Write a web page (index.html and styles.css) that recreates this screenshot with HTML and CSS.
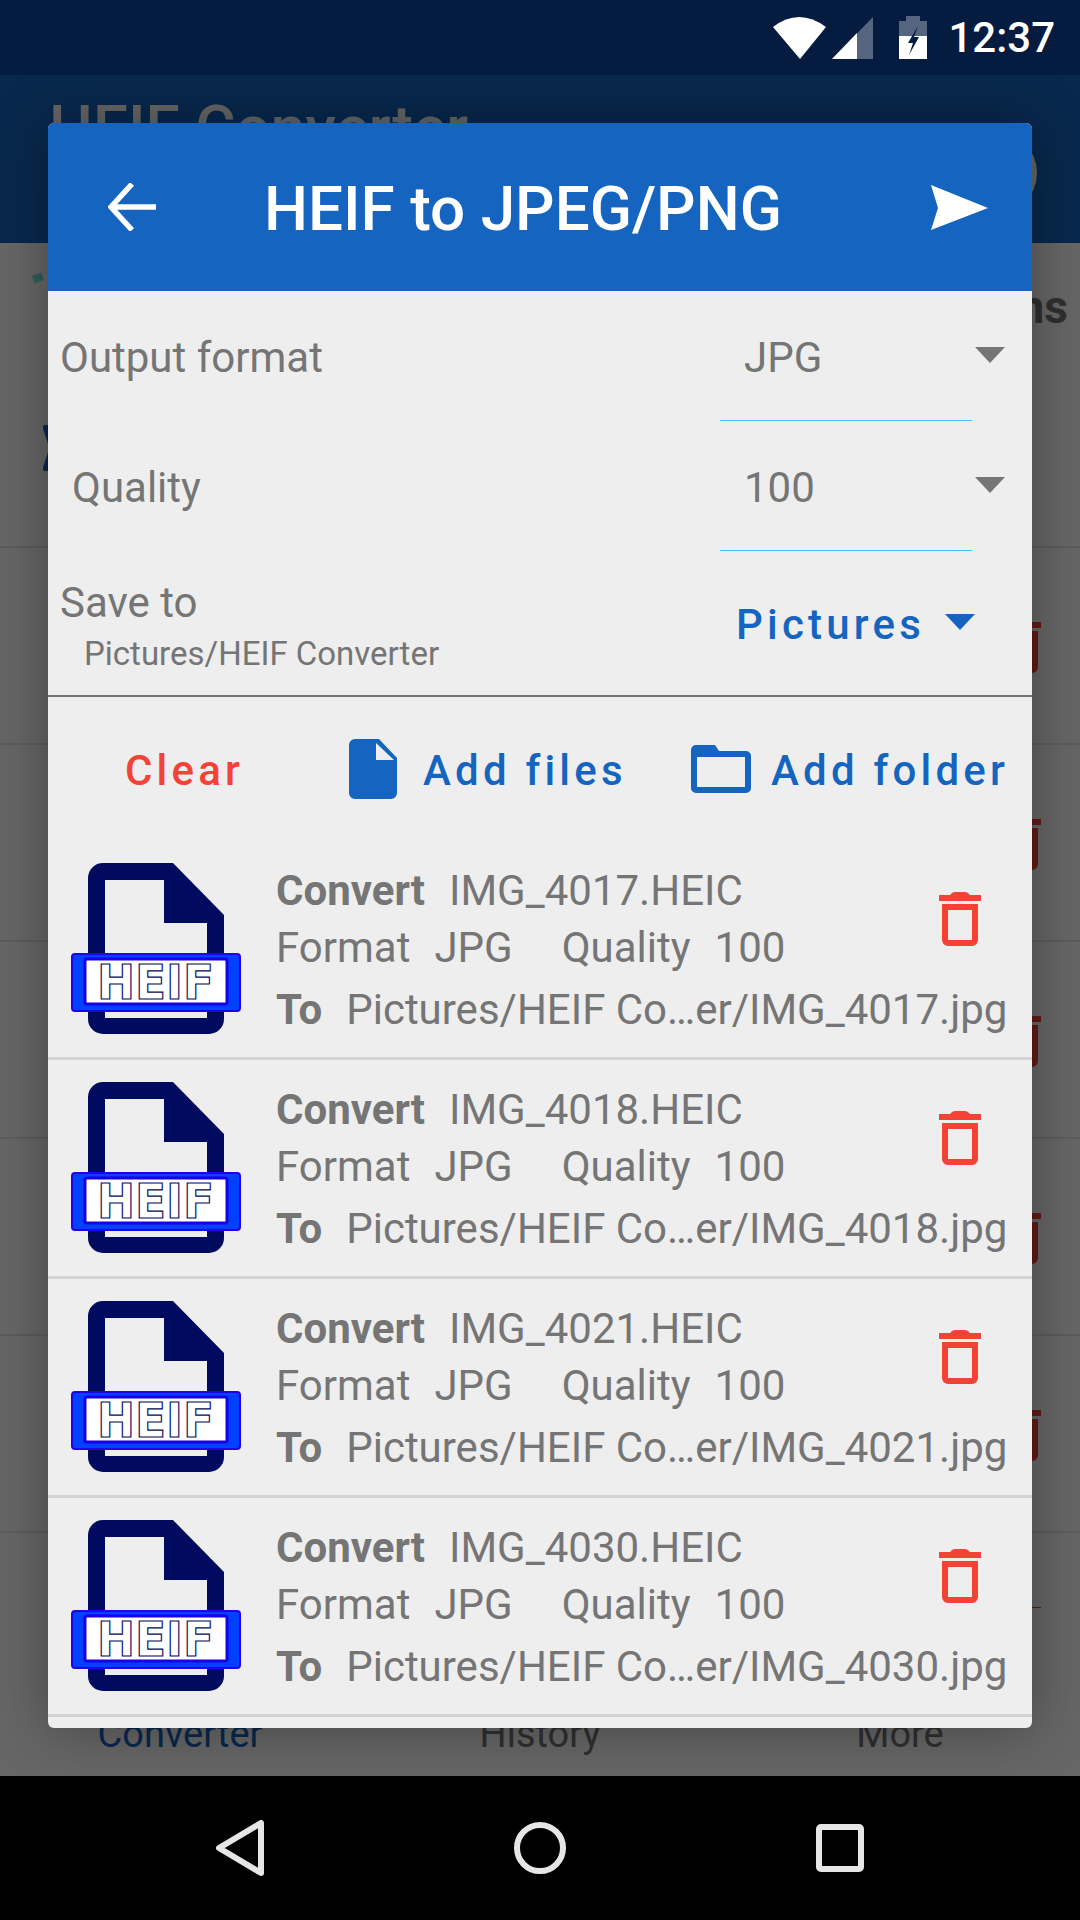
FILE: index.html
```html
<!DOCTYPE html>
<html>
  <head>
    <meta charset="utf-8" />
    <title>HEIF Converter</title>
    <link rel="stylesheet" href="styles.css">
  </head>
  <body>
    <svg class="defs" width="0" height="0">
      <symbol id="trash" viewBox="0 0 42 54">
        <path d="M11 3q2-3 5-3h10q3 0 5 3zM0 3h42v6H0z" />
        <path fill-rule="evenodd" d="M3 12h36v36a6 6 0 0 1-6 6H9a6 6 0 0 1-6-6zM9 18v30h24V18z" />
      </symbol>
    </svg>

    <div class="status-bar">
      <svg class="wifi" width="53" height="42" viewBox="0 0 53 42">
        <path fill="#fff" d="M0 10Q26-10 53 10L27 42Z" />
      </svg>
      <svg class="signal" width="41" height="42" viewBox="0 0 41 42">
        <path fill="#55657f" d="M41 0V42H0Z" />
        <path fill="#fff" d="M25 16V42H0Z" />
      </svg>
      <svg class="battery" width="28" height="43" viewBox="0 0 28 43">
        <path fill="#55657f" d="M7 0H21V5H28V20H0V5H7Z" />
        <path fill="#fff" d="M0 20H28V43H0Z" />
        <path fill="#051c40" d="M19 10L9 27H14L10 39L20 21H15Z" />
      </svg>
      <span class="clock">12:37</span>
    </div>

    <div class="main">
      <!-- the page behind the dialog -->
      <div class="app-bar">
        <div class="app-title">HEIF Converter</div>
        <div class="app-circle"></div>
      </div>
      <div class="back-list">
        <div class="back-head">
          <div class="back-mark"></div>
          <div class="back-options">Conversions</div>
          <svg class="back-x" width="30" height="46" viewBox="0 0 30 46">
            <path fill="none" stroke="#1565c0" stroke-width="6" d="M2 0L17 46M17 0L2 46" />
          </svg>
        </div>
        <div class="back-row"><svg class="back-trash"><use href="#trash" /></svg></div>
        <div class="back-row"><svg class="back-trash"><use href="#trash" /></svg></div>
        <div class="back-row"><svg class="back-trash"><use href="#trash" /></svg></div>
        <div class="back-row"><svg class="back-trash"><use href="#trash" /></svg></div>
        <div class="back-row"><svg class="back-trash"><use href="#trash" /></svg></div>
        <div class="back-row"><svg class="back-trash"><use href="#trash" /></svg></div>
      </div>
      <div class="tabs">
        <span class="tab tab-active">Converter</span>
        <span class="tab">History</span>
        <span class="tab">More</span>
      </div>

      <div class="scrim">
        <div class="dialog">
          <div class="dialog-header">
            <svg class="back-arrow" width="48" height="48" viewBox="0 0 48 48">
              <path fill="none" stroke="#fff" stroke-width="5.5" d="M24 1L3 24L24 47M3 24H48" />
            </svg>
            <div class="dialog-title">HEIF to JPEG/PNG</div>
            <svg class="send" width="57" height="45" viewBox="0 0 57 45">
              <path fill="#fff" d="M0 0L57 23L0 45L7 23Z" />
            </svg>
          </div>

          <div class="setting">
            <div class="setting-label">Output format</div>
            <div class="select-value">JPG</div>
            <div class="arrow"></div>
          </div>
          <div class="setting">
            <div class="setting-label setting-label-quality">Quality</div>
            <div class="select-value">100</div>
            <div class="arrow"></div>
          </div>
          <div class="setting setting-save">
            <div class="save-to">
              <div class="save-label">Save to</div>
              <div class="save-path">Pictures/HEIF Converter</div>
            </div>
            <div class="save-button">Pictures</div>
            <div class="arrow arrow-blue"></div>
          </div>

          <div class="actions">
            <div class="action action-clear"><span>Clear</span></div>
            <div class="action">
              <svg width="48" height="60" viewBox="0 0 48 60">
                <path fill="#1565c0" fill-rule="evenodd" d="M6 0H30L48 19V54a6 6 0 0 1-6 6H6a6 6 0 0 1-6-6V6a6 6 0 0 1 6-6ZM27 4V21H45Z" />
              </svg>
              <span>Add files</span>
            </div>
            <div class="action action-folder">
              <svg width="60" height="48" viewBox="0 0 60 48">
                <path fill="#1565c0" fill-rule="evenodd" d="M5 0H24L28 6H55a5 5 0 0 1 5 5V43a5 5 0 0 1-5 5H5a5 5 0 0 1-5-5V5a5 5 0 0 1 5-5ZM6 12V42H54V12Z" />
              </svg>
              <span>Add folder</span>
            </div>
          </div>

          <div class="item">
            <svg class="heif-icon" width="170" height="171" viewBox="0 0 170 171">
              <path class="doc" fill-rule="evenodd" d="M32 0H102L153 52V156a15 15 0 0 1-15 15H32a15 15 0 0 1-15-15V15a15 15 0 0 1 15-15ZM34 17V155H136V60H93V17Z" />
              <rect class="band" x="1" y="91" width="168" height="57" rx="3" />
              <rect class="band-inner" x="14" y="96" width="142" height="45" rx="2" />
              <text class="band-text" x="26" y="136" textLength="117" lengthAdjust="spacingAndGlyphs">HEIF</text>
            </svg>
            <div class="item-text">
              <div class="item-top">
                <div>
                  <div class="line line-first"><b>Convert</b><span>IMG_4017.HEIC</span></div>
                  <div class="line line-first"><span>Format</span><span>JPG</span><span class="quality">Quality</span><span>100</span></div>
                </div>
                <svg class="trash"><use href="#trash" /></svg>
              </div>
              <div class="line line-to"><b>To</b><span>Pictures/HEIF Co…er/IMG_4017.jpg</span></div>
            </div>
          </div>

          <div class="item">
            <svg class="heif-icon" width="170" height="171" viewBox="0 0 170 171">
              <path class="doc" fill-rule="evenodd" d="M32 0H102L153 52V156a15 15 0 0 1-15 15H32a15 15 0 0 1-15-15V15a15 15 0 0 1 15-15ZM34 17V155H136V60H93V17Z" />
              <rect class="band" x="1" y="91" width="168" height="57" rx="3" />
              <rect class="band-inner" x="14" y="96" width="142" height="45" rx="2" />
              <text class="band-text" x="26" y="136" textLength="117" lengthAdjust="spacingAndGlyphs">HEIF</text>
            </svg>
            <div class="item-text">
              <div class="item-top">
                <div>
                  <div class="line line-first"><b>Convert</b><span>IMG_4018.HEIC</span></div>
                  <div class="line line-first"><span>Format</span><span>JPG</span><span class="quality">Quality</span><span>100</span></div>
                </div>
                <svg class="trash"><use href="#trash" /></svg>
              </div>
              <div class="line line-to"><b>To</b><span>Pictures/HEIF Co…er/IMG_4018.jpg</span></div>
            </div>
          </div>

          <div class="item">
            <svg class="heif-icon" width="170" height="171" viewBox="0 0 170 171">
              <path class="doc" fill-rule="evenodd" d="M32 0H102L153 52V156a15 15 0 0 1-15 15H32a15 15 0 0 1-15-15V15a15 15 0 0 1 15-15ZM34 17V155H136V60H93V17Z" />
              <rect class="band" x="1" y="91" width="168" height="57" rx="3" />
              <rect class="band-inner" x="14" y="96" width="142" height="45" rx="2" />
              <text class="band-text" x="26" y="136" textLength="117" lengthAdjust="spacingAndGlyphs">HEIF</text>
            </svg>
            <div class="item-text">
              <div class="item-top">
                <div>
                  <div class="line line-first"><b>Convert</b><span>IMG_4021.HEIC</span></div>
                  <div class="line line-first"><span>Format</span><span>JPG</span><span class="quality">Quality</span><span>100</span></div>
                </div>
                <svg class="trash"><use href="#trash" /></svg>
              </div>
              <div class="line line-to"><b>To</b><span>Pictures/HEIF Co…er/IMG_4021.jpg</span></div>
            </div>
          </div>

          <div class="item">
            <svg class="heif-icon" width="170" height="171" viewBox="0 0 170 171">
              <path class="doc" fill-rule="evenodd" d="M32 0H102L153 52V156a15 15 0 0 1-15 15H32a15 15 0 0 1-15-15V15a15 15 0 0 1 15-15ZM34 17V155H136V60H93V17Z" />
              <rect class="band" x="1" y="91" width="168" height="57" rx="3" />
              <rect class="band-inner" x="14" y="96" width="142" height="45" rx="2" />
              <text class="band-text" x="26" y="136" textLength="117" lengthAdjust="spacingAndGlyphs">HEIF</text>
            </svg>
            <div class="item-text">
              <div class="item-top">
                <div>
                  <div class="line line-first"><b>Convert</b><span>IMG_4030.HEIC</span></div>
                  <div class="line line-first"><span>Format</span><span>JPG</span><span class="quality">Quality</span><span>100</span></div>
                </div>
                <svg class="trash"><use href="#trash" /></svg>
              </div>
              <div class="line line-to"><b>To</b><span>Pictures/HEIF Co…er/IMG_4030.jpg</span></div>
            </div>
          </div>
        </div>
      </div>
    </div>

    <div class="nav-bar">
      <svg width="48" height="56" viewBox="0 0 48 56">
        <path fill="none" stroke="#e6e6e6" stroke-width="6" stroke-linejoin="round" d="M45 3V53L3 28Z" />
      </svg>
      <svg width="52" height="52" viewBox="0 0 52 52">
        <circle cx="26" cy="26" r="23" fill="none" stroke="#e6e6e6" stroke-width="6" />
      </svg>
      <svg width="48" height="48" viewBox="0 0 48 48">
        <rect x="3" y="3" width="42" height="42" rx="2" fill="none" stroke="#e6e6e6" stroke-width="6" />
      </svg>
    </div>
  </body>
</html>
```

FILE: styles.css
```css
* {
  box-sizing: border-box;
}

body {
  margin: 0;
  width: 1080px;
  height: 1920px;
  display: flex;
  flex-direction: column;
  font-family: Roboto, sans-serif;
  overflow: hidden;
}

.defs {
  position: absolute;
}

/* status bar */
.status-bar {
  height: 75px;
  flex: none;
  background-color: #051c40;
  display: flex;
  align-items: center;
  justify-content: flex-end;
  padding-right: 25px;
}

.wifi {
  margin-right: 6px;
}

.battery {
  margin: 0 21px 0 26px;
}

.clock {
  color: white;
  font-size: 42px;
  font-weight: 500;
}

/* page behind the dialog */
.main {
  position: relative;
  flex: 1;
  display: flex;
  flex-direction: column;
  background-color: white;
  min-height: 0;
}

.app-bar {
  height: 168px;
  flex: none;
  background-color: #1565c0;
  padding: 16px 0 0 49px;
  display: flex;
  justify-content: space-between;
}

.app-title {
  color: white;
  font-size: 62px;
  font-weight: 500;
}

.app-circle {
  width: 84px;
  height: 84px;
  margin: 40px 43px 0 0;
  border-radius: 50%;
  background-color: white;
}

.back-list {
  flex: 1;
  overflow: hidden;
}

.back-head {
  position: relative;
  height: 305px;
  border-bottom: 2px solid #e6e6e6;
}

.back-mark {
  position: absolute;
  left: 33px;
  top: 31px;
  width: 10px;
  height: 8px;
  background-color: #74ece0;
  transform: rotate(-20deg);
}

.back-options {
  text-align: right;
  padding: 37px 12px 0 0;
  color: #757575;
  font-size: 46px;
  font-weight: 700;
}

.back-x {
  position: absolute;
  left: 43px;
  top: 182px;
}

.back-row {
  height: 197px;
  border-bottom: 2px solid #e6e6e6;
  padding: 71px 39px 0 0;
  display: flex;
  justify-content: flex-end;
  color: #f44336;
}

.back-trash {
  width: 42px;
  height: 54px;
  fill: currentColor;
}

.tabs {
  height: 168px;
  flex: none;
  display: grid;
  grid-template-columns: 360px 360px 360px;
  justify-items: center;
  align-items: end;
  padding-bottom: 20px;
  background-color: white;
  color: #757575;
  font-size: 38px;
}

.tab-active {
  color: #1565c0;
}

.scrim {
  position: absolute;
  top: 0;
  left: 0;
  right: 0;
  bottom: 0;
  padding: 48px;
  background-color: rgba(0, 0, 0, 0.6);
}

/* dialog */
.dialog {
  height: 100%;
  background-color: #eeeeee;
  border-radius: 6px;
  overflow: hidden;
  box-shadow: 0 0 56px rgba(0, 0, 0, 0.34);
  color: #757575;
  font-size: 42px;
}

.dialog-header {
  height: 168px;
  background-color: #1565c0;
  display: flex;
  align-items: center;
  padding: 0 44px 0 60px;
}

.dialog-title {
  margin: 2px 0 0 108px;
  color: white;
  font-size: 62px;
  font-weight: 500;
}

.send {
  margin-left: auto;
}

.setting {
  height: 130px;
  display: flex;
  align-items: center;
  padding-right: 27px;
}

.setting-label {
  padding-left: 12px;
  margin: 3px auto 0 0;
}

.setting-label-quality {
  padding-left: 24px;
}

.select-value {
  width: 252px;
  height: 130px;
  line-height: 134px;
  padding-left: 24px;
  border-bottom: 1px solid #40c4ff;
  margin-right: 3px;
}

.arrow {
  border-left: 15px solid transparent;
  border-right: 15px solid transparent;
  border-top: 16px solid #757575;
  margin-bottom: 3px;
}

.arrow-blue {
  border-top-color: #1565c0;
  margin-left: 20px;
}

.setting-save {
  height: 146px;
  padding-right: 57px;
  border-bottom: 2px solid #757575;
}

.save-to {
  margin-right: auto;
  padding: 4px 0 0 12px;
}

.save-label {
  height: 56px;
}

.save-path {
  padding-left: 24px;
  font-size: 33px;
}

.save-button {
  margin-top: 2px;
  color: #1565c0;
  font-size: 42px;
  font-weight: 500;
  letter-spacing: 4.2px;
}

.actions {
  height: 144px;
  display: grid;
  grid-template-columns: 224px 342px 1fr;
  align-items: center;
  padding-left: 77px;
  color: #1565c0;
  font-size: 42px;
  font-weight: 500;
  letter-spacing: 4.2px;
}

.action {
  display: flex;
  align-items: center;
  gap: 26px;
}

.action span {
  margin-top: 2px;
}

.action-folder {
  gap: 20px;
}

.action-clear {
  color: #f44336;
}

.item {
  height: 219px;
  display: flex;
  padding: 22px 0 0 23px;
  border-bottom: 3px solid #d3d3d3;
}

.heif-icon {
  flex: none;
  margin-right: 35px;
  overflow: visible;
}

.doc {
  fill: #000a5e;
}

.band {
  fill: #0040ff;
  stroke: #2200ee;
  stroke-width: 2;
}

.band-inner {
  fill: white;
  stroke: #1a00e6;
  stroke-width: 3;
}

.band-text {
  font-family: "DejaVu Sans", sans-serif;
  font-weight: 700;
  font-size: 48px;
  fill: white;
  stroke: #000a5e;
  stroke-width: 1.2;
}

.item-text {
  flex: 1;
  margin-top: -1px;
}

.item-top {
  display: flex;
  align-items: center;
  justify-content: space-between;
  padding-right: 51px;
}

.line {
  display: flex;
  gap: 24px;
  white-space: nowrap;
}

.line-first {
  height: 57px;
  line-height: 57px;
}

.line-to {
  height: 67px;
  line-height: 67px;
}

.quality {
  margin-left: 25px;
}

.trash {
  width: 42px;
  height: 54px;
  fill: #f44336;
}

.nav-bar {
  height: 144px;
  flex: none;
  background-color: black;
  display: grid;
  grid-template-columns: 300px 300px 300px;
  justify-content: center;
  justify-items: center;
  align-items: center;
}
```
